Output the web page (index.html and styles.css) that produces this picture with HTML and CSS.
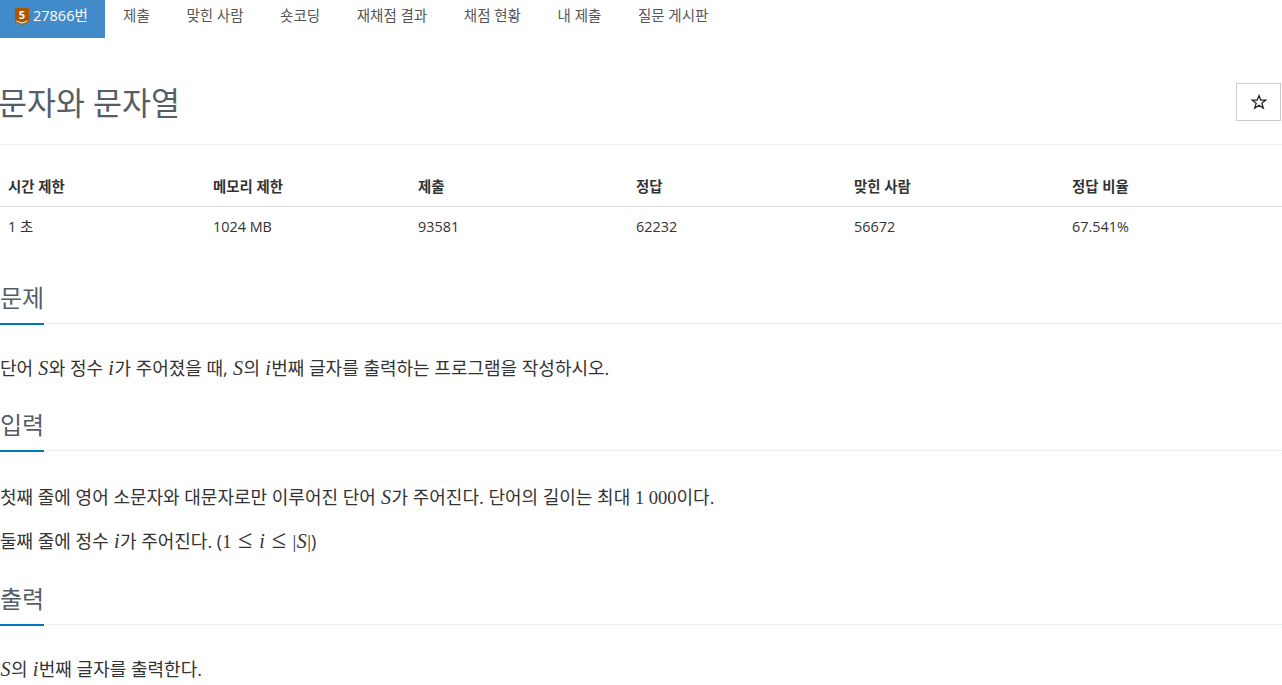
FILE: index.html
```html
<!DOCTYPE html>
<html lang="ko">
<head>
    <meta charset="utf-8">
    <title>문자와 문자열</title>
    <link rel="stylesheet" href="styles.css">
</head>
<body>
    <ul class="tabs">
        <li class="tab active">
            <svg class="tier" width="14" height="17" viewBox="0 0 14 17"><path d="M0 0H14V14L7 17L0 14Z" fill="#ad5600"/><path d="M1.5 13L7 15.2L12.5 13" fill="none" stroke="#fff" stroke-width="1"/><text x="7" y="10.5" class="tier-num">5</text></svg>
            27866번
        </li>
        <li class="tab">제출</li>
        <li class="tab">맞힌 사람</li>
        <li class="tab">숏코딩</li>
        <li class="tab">재채점 결과</li>
        <li class="tab">채점 현황</li>
        <li class="tab">내 제출</li>
        <li class="tab">질문 게시판</li>
    </ul>

    <div class="page-header">
        <h1 class="title">문자와 문자열</h1>
        <button class="star">
            <svg width="16" height="16" viewBox="0 0 16 16"><path d="M8 1.6L9.8 6.2H14.8L10.8 9.2L12.3 14.2L8 11.2L3.7 14.2L5.2 9.2L1.2 6.2H6.2Z" fill="none" stroke="#222" stroke-width="1.3"/></svg>
        </button>
    </div>

    <table class="info">
        <thead>
            <tr>
                <th class="col-a">시간 제한</th>
                <th class="col-a">메모리 제한</th>
                <th class="col-b">제출</th>
                <th class="col-b">정답</th>
                <th class="col-b">맞힌 사람</th>
                <th class="col-b">정답 비율</th>
            </tr>
        </thead>
        <tbody>
            <tr>
                <td>1 초</td>
                <td>1024 MB</td>
                <td>93581</td>
                <td>62232</td>
                <td>56672</td>
                <td>67.541%</td>
            </tr>
        </tbody>
    </table>

    <section class="block">
        <div class="headline"><h2 class="headline-text">문제</h2></div>
        <p>단어 <i class="m">S</i>와 정수 <i class="m">i</i>가 주어졌을 때, <i class="m">S</i>의 <i class="m">i</i>번째 글자를 출력하는 프로그램을 작성하시오.</p>
    </section>

    <section class="block">
        <div class="headline"><h2 class="headline-text">입력</h2></div>
        <p class="tall">첫째 줄에 영어 소문자와 대문자로만 이루어진 단어 <i class="m">S</i>가 주어진다. 단어의 길이는 최대 <span class="n">1 000</span>이다.</p>
        <p class="last">둘째 줄에 정수 <i class="m">i</i>가 주어진다. (<span class="n">1</span><span class="rel">≤</span><i class="m">i</i><span class="rel">≤</span><span class="n">|</span><i class="m">S</i><span class="n">|</span>)</p>
    </section>

    <section class="block">
        <div class="headline"><h2 class="headline-text">출력</h2></div>
        <p><i class="m">S</i>의 <i class="m">i</i>번째 글자를 출력한다.</p>
    </section>
</body>
</html>
```

FILE: styles.css
```css
body { margin: 0; background: #fff; color: #333; font-family: "Open Sans", "Noto Sans CJK KR", sans-serif; font-size: 14px; overflow: hidden; }

/* top tabs */
.tabs { display: flex; margin: 0; padding: 0; list-style: none; height: 38px; }
.tab { padding: 0 18.3px; font-size: 14.5px; line-height: 31px; color: #555; white-space: nowrap; }
.tab.active { display: flex; align-items: flex-start; gap: 4px; padding: 0 17px 0 15px; background: #428bca; color: #fff; }
.tier { margin-top: 8px; flex: none; }
.tier-num { font-family: "Open Sans", sans-serif; font-size: 11px; font-weight: 700; fill: #fff; text-anchor: middle; }

/* title */
.page-header { display: flex; justify-content: space-between; align-items: flex-start; height: 106px; border-bottom: 1px solid #eee; }
.title { margin: 42px 0 0 -2px; font-size: 31.5px; font-weight: 400; line-height: 46px; color: #555e66; }
.star { display: flex; align-items: center; justify-content: center; width: 45px; height: 38px; margin: 45px 1px 0 0; padding: 0; background: #fff; border: 1px solid #ccc; }

/* limits table */
.info { width: 1282px; margin: 26px 0 28px; border-collapse: collapse; table-layout: fixed; font-size: 14.4px; }
.col-a { width: 189px; }
.col-b { width: 202px; }
.info th { padding: 6px 8px 9px; border-bottom: 1px solid #ddd; text-align: left; font-weight: 700; line-height: 20px; color: #333; }
.info td { padding: 10px 8px 9px; line-height: 20px; color: #333; }

/* sections */
.block { margin-top: 21px; }
.headline { height: 49px; margin-bottom: 12px; border-bottom: 1px dotted #dde6ee; }
.headline-text { display: inline-block; height: 49px; margin: 0 0 0 -2px; padding-left: 2px; border-bottom: 2px solid #0076c0; font-size: 24px; font-weight: 400; line-height: 48px; color: #555e66; }
.block p { margin: 0; padding-top: 20px; height: 24px; font-size: 18px; line-height: 24px; color: #333; white-space: nowrap; }
.block p.tall { padding-top: 22px; }
.block p.last { padding-bottom: 1px; }
.m { font-family: "Liberation Serif", serif; font-size: 20px; font-style: italic; padding: 0 .5px; }
.n { font-family: "Liberation Serif", serif; font-size: 18.5px; }
.rel { margin: 0 6.5px; font-family: "Liberation Serif", serif; font-size: 26px; line-height: 20px; }
```
